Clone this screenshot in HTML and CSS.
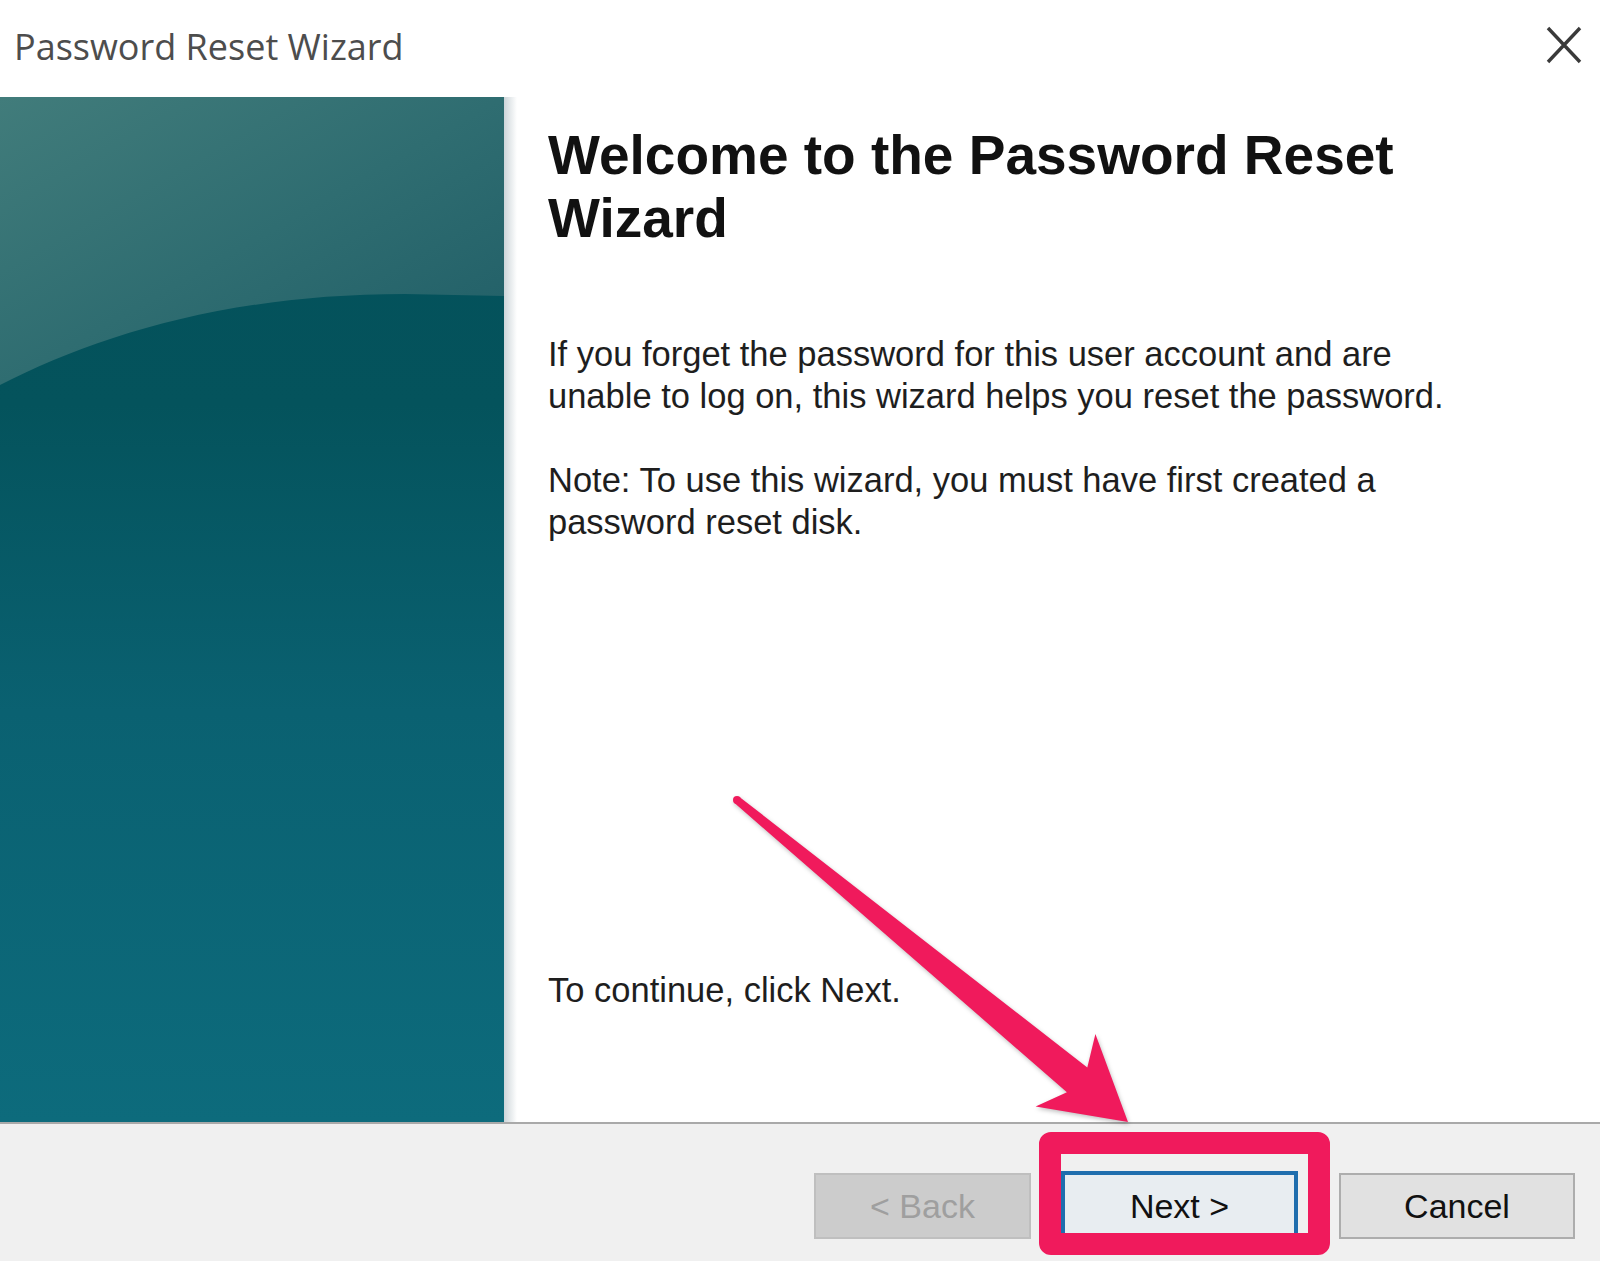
FILE: index.html
```html
<!DOCTYPE html>
<html lang="en">
<head>
  <meta charset="UTF-8" />
  <title>Password Reset Wizard</title>
  <link rel="stylesheet" href="styles.css">
</head>
<body>

<div class="window">
  <div class="titlebar">
    <span class="title">Password Reset Wizard</span>
    <button class="close-btn" title="Close">
      <svg width="36" height="38" viewBox="0 0 36 38">
        <path d="M2 2 L34 36 M34 2 L2 36" stroke="#3a3a3a" stroke-width="3.4" fill="none" />
      </svg>
    </button>
  </div>

  <div class="main">
    <div class="side">
      <svg width="504" height="1025" viewBox="0 0 504 1025" preserveAspectRatio="none">
        <defs>
          <linearGradient id="deep" x1="0" y1="0" x2="0" y2="1">
            <stop offset="0" stop-color="#03505a" />
            <stop offset="0.3" stop-color="#04535c" />
            <stop offset="0.6" stop-color="#0a6171" />
            <stop offset="1" stop-color="#0d6b7c" />
          </linearGradient>
          <linearGradient id="glow" x1="0" y1="0" x2="1" y2="1">
            <stop offset="0" stop-color="#417c7b" />
            <stop offset="0.5" stop-color="#2f6d71" />
            <stop offset="1" stop-color="#1f5d66" />
          </linearGradient>
        </defs>
        <rect width="504" height="1025" fill="url(#deep)" />
        <path d="M0 288 C 95 240 225 197 405 197 L504 199 V0 H0 Z" fill="url(#glow)" />
      </svg>
    </div>
    <div class="side-edge"></div>

    <div class="content">
      <h1>Welcome to the Password Reset Wizard</h1>
      <p>If you forget the password for this user account and are unable to log on, this wizard helps you reset the password.</p>
      <p>Note: To use this wizard, you must have first created a password reset disk.</p>
      <p class="continue">To continue, click Next.</p>
    </div>
  </div>

  <div class="footer">
    <button class="btn btn-back" disabled>&lt; Back</button>
    <button class="btn btn-next">Next &gt;</button>
    <button class="btn btn-cancel">Cancel</button>
    <div class="highlight"></div>
  </div>

  <!-- annotation arrow pointing at Next -->
  <svg class="arrow" width="1600" height="1261" viewBox="0 0 1600 1261">
    <circle cx="737" cy="800" r="4" fill="#f01a5c" />
    <polygon fill="#f01a5c"
      points="739.5,796.9 1087.3,1067.4 1095.4,1034 1128,1122 1035.6,1106.6 1066.9,1092.2 734.5,803.1" />
  </svg>
</div>

</body>
</html>
```

FILE: styles.css
```css
body {
  margin: 0;
  background: white;
  font-family: "Liberation Sans", Arial, sans-serif;
}

.window {
  position: relative;
  width: 1600px;
  height: 1261px;
  overflow: hidden;
  background: white;
}

.titlebar {
  height: 97px;
  display: flex;
  align-items: center;
  justify-content: space-between;
  padding: 0 18px 0 14px;
  box-sizing: border-box;
}

.title {
  font-family: "Open Sans", "Noto Sans", sans-serif;
  font-size: 36px;
  color: #4d4d4d;
  margin-top: -4px;
}

.close-btn {
  background: none;
  border: none;
  padding: 0;
  margin-top: -8px;
  cursor: pointer;
  display: flex;
}

.main {
  display: flex;
  height: 1025px;
}

.side {
  width: 504px;
  flex-shrink: 0;
  display: flex;
}

.side-edge {
  width: 13px;
  flex-shrink: 0;
  background: linear-gradient(to right, #cdd5d9, #e6eaec 50%, #fff);
}

.content {
  flex: 1;
  display: flex;
  flex-direction: column;
  padding: 27px 0 111px 31px;
  color: #1e1e1e;
}

.content h1 {
  margin: 0 0 83px;
  max-width: 920px;
  font-size: 55px;
  line-height: 63px;
  font-weight: bold;
  color: #111;
}

.content p {
  margin: 0 0 42px;
  max-width: 920px;
  font-size: 34.5px;
  line-height: 42px;
}

.content .continue {
  margin: auto 0 0;
}

.footer {
  position: relative;
  height: 139px;
  box-sizing: border-box;
  border-top: 2px solid #a9a9a9;
  background: #f0f0f0;
  display: flex;
  align-items: flex-start;
  padding: 49px 25px 0 814px;
}

.btn {
  height: 66px;
  font-family: "Liberation Sans", Arial, sans-serif;
  font-size: 34px;
  box-sizing: border-box;
  padding: 0;
}

.btn-back {
  width: 217px;
  background: #cccccc;
  border: 2px solid #bfbfbf;
  color: #9f9f9f;
}

.btn-next {
  width: 237px;
  margin-left: 30px;
  margin-top: -2px;
  padding-top: 4px;
  background: #e8edf1;
  border: 4px solid #1f6eae;
  color: #111;
}

.btn-cancel {
  width: 236px;
  margin-left: 41px;
  background: #e1e1e1;
  border: 2px solid #adadad;
  color: #111;
}

.highlight {
  position: absolute;
  left: 1039px;
  top: 8px;
  width: 291px;
  height: 123px;
  box-sizing: border-box;
  border: 22px solid #f01a5c;
  border-radius: 12px;
}

.arrow {
  position: absolute;
  left: 0;
  top: 0;
  pointer-events: none;
  filter: drop-shadow(1px 2px 2px rgba(0,0,0,0.25));
}
```
